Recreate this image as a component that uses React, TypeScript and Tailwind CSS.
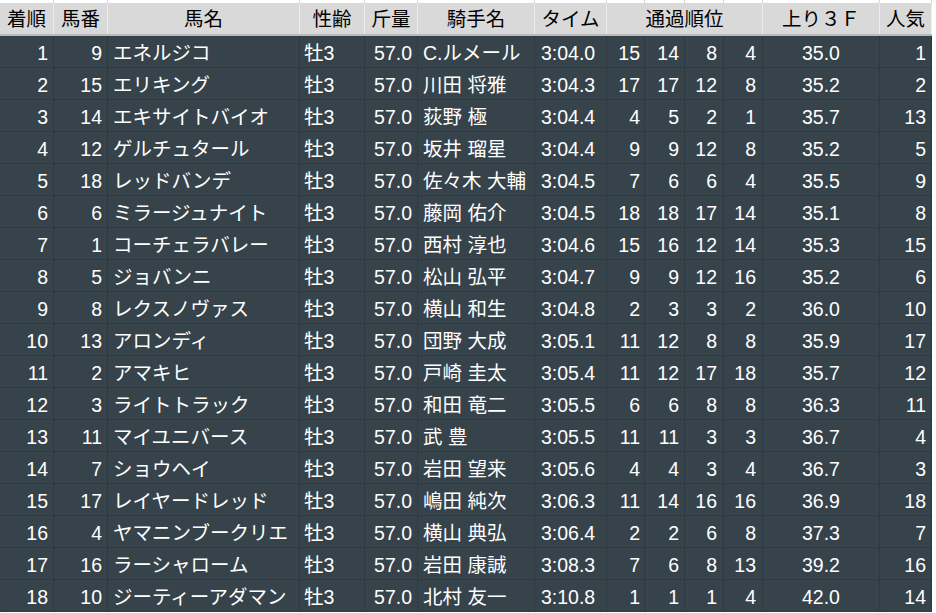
import React from "react";

type Row = [number, number, string, string, string, string, string, number, number, number, number, string, number];

const rows: Row[] = [
  [1, 9, "エネルジコ", "牡3", "57.0", "C.ルメール", "3:04.0", 15, 14, 8, 4, "35.0", 1],
  [2, 15, "エリキング", "牡3", "57.0", "川田 将雅", "3:04.3", 17, 17, 12, 8, "35.2", 2],
  [3, 14, "エキサイトバイオ", "牡3", "57.0", "荻野 極", "3:04.4", 4, 5, 2, 1, "35.7", 13],
  [4, 12, "ゲルチュタール", "牡3", "57.0", "坂井 瑠星", "3:04.4", 9, 9, 12, 8, "35.2", 5],
  [5, 18, "レッドバンデ", "牡3", "57.0", "佐々木 大輔", "3:04.5", 7, 6, 6, 4, "35.5", 9],
  [6, 6, "ミラージュナイト", "牡3", "57.0", "藤岡 佑介", "3:04.5", 18, 18, 17, 14, "35.1", 8],
  [7, 1, "コーチェラバレー", "牡3", "57.0", "西村 淳也", "3:04.6", 15, 16, 12, 14, "35.3", 15],
  [8, 5, "ジョバンニ", "牡3", "57.0", "松山 弘平", "3:04.7", 9, 9, 12, 16, "35.2", 6],
  [9, 8, "レクスノヴァス", "牡3", "57.0", "横山 和生", "3:04.8", 2, 3, 3, 2, "36.0", 10],
  [10, 13, "アロンディ", "牡3", "57.0", "団野 大成", "3:05.1", 11, 12, 8, 8, "35.9", 17],
  [11, 2, "アマキヒ", "牡3", "57.0", "戸崎 圭太", "3:05.4", 11, 12, 17, 18, "35.7", 12],
  [12, 3, "ライトトラック", "牡3", "57.0", "和田 竜二", "3:05.5", 6, 6, 8, 8, "36.3", 11],
  [13, 11, "マイユニバース", "牡3", "57.0", "武 豊", "3:05.5", 11, 11, 3, 3, "36.7", 4],
  [14, 7, "ショウヘイ", "牡3", "57.0", "岩田 望来", "3:05.6", 4, 4, 3, 4, "36.7", 3],
  [15, 17, "レイヤードレッド", "牡3", "57.0", "嶋田 純次", "3:06.3", 11, 14, 16, 16, "36.9", 18],
  [16, 4, "ヤマニンブークリエ", "牡3", "57.0", "横山 典弘", "3:06.4", 2, 2, 6, 8, "37.3", 7],
  [17, 16, "ラーシャローム", "牡3", "57.0", "岩田 康誠", "3:08.3", 7, 6, 8, 13, "39.2", 16],
  [18, 10, "ジーティーアダマン", "牡3", "57.0", "北村 友一", "3:10.8", 1, 1, 1, 4, "42.0", 14],
];

const cols = "grid grid-cols-[54px_54px_192px_65px_53px_117px_72px_38px_40px_39px_39px_117px_52px]";

const headers: { label: string; span?: boolean }[] = [
  { label: "着順" },
  { label: "馬番" },
  { label: "馬名" },
  { label: "性齢" },
  { label: "斤量" },
  { label: "騎手名" },
  { label: "タイム" },
  { label: "通過順位", span: true },
  { label: "上り３Ｆ" },
  { label: "人気" },
];

const cell = "flex items-center pt-[4px] border-r border-b border-dotted border-[#27323a] whitespace-nowrap overflow-hidden";

export default function App() {
  return (
    <div
      className="w-[936px] h-[613px] bg-white overflow-hidden text-[19.5px] leading-none"
      style={{ fontFamily: '"Liberation Sans", "Noto Sans CJK JP", sans-serif' }}
    >
      <div className="w-[932px]">
        {/* top strip */}
        <div className={`${cols} h-[3px]`}>
          {Array.from({ length: 13 }).map((_, i) => (
            <div key={i} className="border-r border-[#d4d4d4]" />
          ))}
        </div>
        {/* header */}
        <div className={`${cols} h-[33px] bg-[#d9d9d9] border-b-2 border-[#b9b9b9] text-black`}>
          {headers.map((h, i) => (
            <div
              key={i}
              className={`flex items-center justify-center pt-[2px] border-r border-[#ececec] ${h.span ? "col-span-4" : ""}`}
            >
              {h.label}
            </div>
          ))}
        </div>
        {/* rows */}
        {rows.map((r, i) => (
          <div key={i} className={`${cols} h-[32px] bg-[#36434b] text-white`}>
            <div className={`${cell} justify-end pr-[5px]`}>{r[0]}</div>
            <div className={`${cell} justify-end pr-[5px]`}>{r[1]}</div>
            <div className={`${cell} justify-start pl-[5px]`}>{r[2]}</div>
            <div className={`${cell} justify-start pl-[4px]`}>{r[3]}</div>
            <div className={`${cell} justify-end pr-[5px]`}>{r[4]}</div>
            <div className={`${cell} justify-start pl-[5px]`}>{r[5]}</div>
            <div className={`${cell} justify-start pl-[6px]`}>{r[6]}</div>
            <div className={`${cell} justify-end pr-[4px]`}>{r[7]}</div>
            <div className={`${cell} justify-end pr-[5px]`}>{r[8]}</div>
            <div className={`${cell} justify-end pr-[6px]`}>{r[9]}</div>
            <div className={`${cell} justify-end pr-[6px]`}>{r[10]}</div>
            <div className={`${cell} justify-center`}>{r[11]}</div>
            <div className={`${cell} justify-end pr-[5px]`}>{r[12]}</div>
          </div>
        ))}
      </div>
    </div>
  );
}
